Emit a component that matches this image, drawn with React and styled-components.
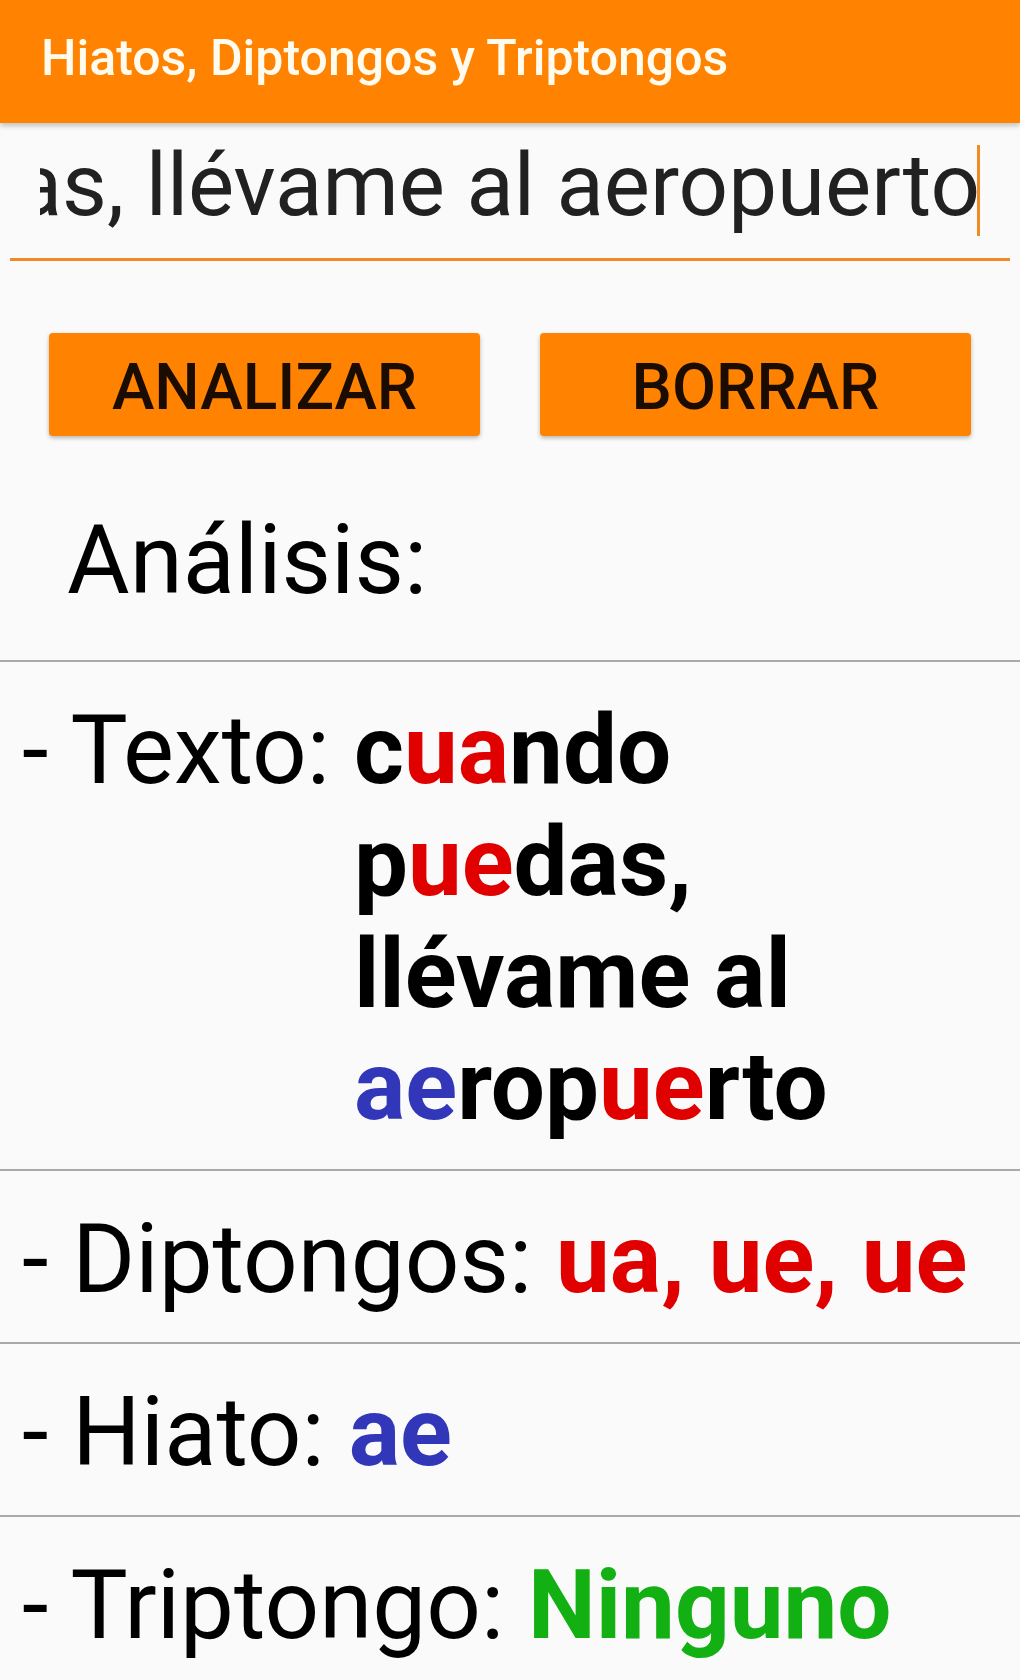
import React from 'react';
import styled, { createGlobalStyle } from 'styled-components';

const GlobalStyle = createGlobalStyle`
  html, body {
    margin: 0;
    padding: 0;
    background: #fafafa;
    font-family: Roboto, "Liberation Sans", sans-serif;
  }
`;

const AppBar = styled.header`
  height: 123px;
  background: #ff8200;
  display: flex;
  align-items: center;
  padding: 0 0 8px 41px;
  box-sizing: border-box;
  box-shadow: 0 3px 5px rgba(0, 0, 0, 0.22);
  position: relative;
  z-index: 1;
`;

const Title = styled.h1`
  margin: 0;
  font-size: 50px;
  font-weight: 500;
  color: #fffcef;
`;

const InputWrap = styled.div`
  margin: 0 10px;
  padding: 11px 30px 22px 30px;
  border-bottom: 3px solid #f08a24;
`;

const Field = styled.div`
  display: flex;
  justify-content: flex-end;
  overflow: hidden;
  height: 102px;
`;

const FieldText = styled.span`
  flex-shrink: 0;
  white-space: nowrap;
  font-size: 87px;
  color: #212121;
`;

const Caret = styled.span`
  flex-shrink: 0;
  width: 3px;
  height: 93px;
  margin: 11px 0 0 -3px;
  background: #f08a24;
`;

const Buttons = styled.div`
  display: flex;
  gap: 60px;
  margin: 72px 0 0 49px;
`;

const Button = styled.button`
  width: 431px;
  height: 103px;
  border: none;
  border-radius: 4px;
  background: #ff8200;
  box-shadow: 0 2px 4px rgba(0, 0, 0, 0.28);
  font-family: Roboto, "Liberation Sans", sans-serif;
  font-size: 64px;
  font-weight: 500;
  color: #1a0c00;
  text-transform: uppercase;
  padding: 6px 0 0 0;
  cursor: pointer;
`;

const Heading = styled.h2`
  margin: 68px 0 0 0;
  padding: 0 0 44px 67px;
  font-size: 96px;
  font-weight: 400;
  color: #000;
`;

const Row = styled.div`
  display: flex;
  border-top: 2px solid #a9a9a9;
  padding: 32px 0 27px 22px;
  font-size: 96px;
  color: #000;
`;

const Label = styled.span`
  flex-shrink: 0;
  white-space: pre;
`;

const Value = styled.span`
  flex: 1;
  font-weight: 700;
  color: ${p => p.color || '#000'};
`;

const Mark = styled.span`
  color: ${p => p.color};
`;

const RED = '#e00000';
const BLUE = '#3137b8';
const GREEN = '#12b012';

export default function App() {
  return (
    <>
      <GlobalStyle />
      <AppBar>
        <Title>Hiatos, Diptongos y Triptongos</Title>
      </AppBar>
      <InputWrap>
        <Field>
          <FieldText>cuando puedas, llévame al aeropuerto</FieldText>
          <Caret />
        </Field>
      </InputWrap>
      <Buttons>
        <Button>Analizar</Button>
        <Button>Borrar</Button>
      </Buttons>
      <Heading>Análisis:</Heading>
      <Row>
        <Label>- Texto: </Label>
        <Value>
          c<Mark color={RED}>ua</Mark>ndo p<Mark color={RED}>ue</Mark>das, llévame al{' '}
          <Mark color={BLUE}>ae</Mark>rop<Mark color={RED}>ue</Mark>rto
        </Value>
      </Row>
      <Row>
        <Label>- Diptongos: </Label>
        <Value color={RED}>ua, ue, ue</Value>
      </Row>
      <Row>
        <Label>- Hiato: </Label>
        <Value color={BLUE}>ae</Value>
      </Row>
      <Row>
        <Label>- Triptongo: </Label>
        <Value color={GREEN}>Ninguno</Value>
      </Row>
    </>
  );
}
